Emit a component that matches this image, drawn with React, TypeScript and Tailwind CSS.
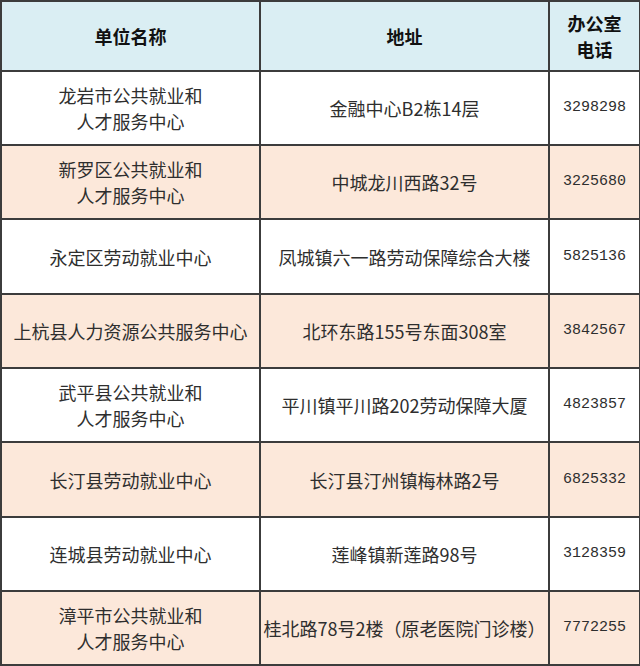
const rows = [
  { name: ["龙岩市公共就业和", "人才服务中心"], addr: "金融中心B2栋14层", tel: "3298298", h: "h-[74px]" },
  { name: ["新罗区公共就业和", "人才服务中心"], addr: "中城龙川西路32号", tel: "3225680", h: "h-[74px]" },
  { name: ["永定区劳动就业中心"], addr: "凤城镇六一路劳动保障综合大楼", tel: "5825136", h: "h-[75px]" },
  { name: ["上杭县人力资源公共服务中心"], addr: "北环东路155号东面308室", tel: "3842567", h: "h-[74px]" },
  { name: ["武平县公共就业和", "人才服务中心"], addr: "平川镇平川路202劳动保障大厦", tel: "4823857", h: "h-[74px]" },
  { name: ["长汀县劳动就业中心"], addr: "长汀县汀州镇梅林路2号", tel: "6825332", h: "h-[75px]" },
  { name: ["连城县劳动就业中心"], addr: "莲峰镇新莲路98号", tel: "3128359", h: "h-[74px]" },
  { name: ["漳平市公共就业和", "人才服务中心"], addr: "桂北路78号2楼（原老医院门诊楼）", tel: "7772255", h: "h-[74px]" },
];

const cell = "border-2 border-[#3c3c3c] text-center align-middle p-0";

export default function App() {
  return (
    <div className="w-[640px] h-[666px] bg-white font-['Noto_Sans_CJK_SC',sans-serif] text-[#2e2e2e]">
      <table className="w-[639px] table-fixed border-collapse">
        <colgroup>
          <col className="w-[259px]" />
          <col className="w-[289px]" />
          <col className="w-[91px]" />
        </colgroup>
        <thead>
          <tr className="h-[70px] bg-[#daeef3] text-[18px] font-bold leading-[26px] text-[#111]">
            <th className={cell}>单位名称</th>
            <th className={cell}>地址</th>
            <th className={cell}>
              <div>办公室</div>
              <div>电话</div>
            </th>
          </tr>
        </thead>
        <tbody>
          {rows.map((r, i) => (
            <tr
              key={r.tel}
              className={`${r.h} ${i % 2 ? "bg-[#fce8da]" : "bg-white"} text-[18px] leading-[26px]`}
            >
              <td className={cell}>
                {r.name.map((line) => (
                  <div key={line}>{line}</div>
                ))}
              </td>
              <td className={cell}>{r.addr}</td>
              <td className={`${cell} font-['Liberation_Mono',monospace] text-[15px]`}>{r.tel}</td>
            </tr>
          ))}
        </tbody>
      </table>
    </div>
  );
}
